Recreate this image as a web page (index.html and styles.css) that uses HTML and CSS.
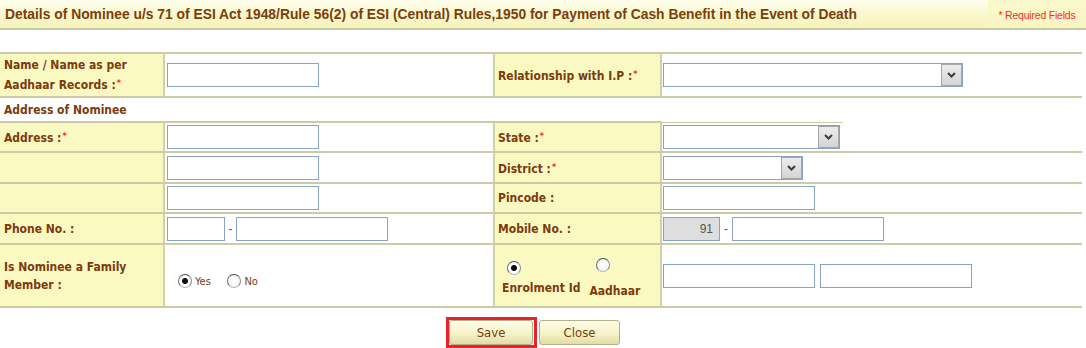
FILE: index.html
```html
<!DOCTYPE html>
<html lang="en">
<head>
<meta charset="utf-8">
<title>Details of Nominee</title>
<link rel="stylesheet" href="styles.css">
</head>
<body>
<div class="header">
  <div class="title">Details of Nominee u/s 71 of ESI Act 1948/Rule 56(2) of ESI (Central) Rules,1950 for Payment of Cash Benefit in the Event of Death</div>
  <div class="required">* Required Fields</div>
</div>

<table class="form">
  <colgroup>
    <col class="c1"><col class="c2"><col class="c3"><col class="c4">
  </colgroup>
  <tr class="r1">
    <td class="lbl first">Name / Name as per<br>Aadhaar Records :<span class="req">*</span></td>
    <td class="val v2"><input class="txt" type="text"></td>
    <td class="lbl mid">Relationship with I.P :<span class="req">*</span></td>
    <td class="val v4">
      <span class="sel w300"><select></select><span class="sel-btn"><svg width="9" height="6" viewBox="0 0 9 6"><polyline points="1,1 4.5,4.5 8,1" fill="none" stroke="#3c3c3c" stroke-width="2"/></svg></span></span>
    </td>
  </tr>
  <tr class="r2">
    <td class="section" colspan="4">Address of Nominee</td>
  </tr>
  <tr class="r3">
    <td class="lbl first">Address :<span class="req">*</span></td>
    <td class="val v2"><input class="txt" type="text"></td>
    <td class="lbl mid">State :<span class="req">*</span></td>
    <td class="val v4 partial">
      <span class="sel w177"><select></select><span class="sel-btn"><svg width="9" height="6" viewBox="0 0 9 6"><polyline points="1,1 4.5,4.5 8,1" fill="none" stroke="#3c3c3c" stroke-width="2"/></svg></span></span>
    </td>
  </tr>
  <tr class="r4">
    <td class="lbl first"></td>
    <td class="val v2"><input class="txt" type="text"></td>
    <td class="lbl mid">District :<span class="req">*</span></td>
    <td class="val v4">
      <span class="sel w140"><select></select><span class="sel-btn"><svg width="9" height="6" viewBox="0 0 9 6"><polyline points="1,1 4.5,4.5 8,1" fill="none" stroke="#3c3c3c" stroke-width="2"/></svg></span></span>
    </td>
  </tr>
  <tr class="r5">
    <td class="lbl first"></td>
    <td class="val v2"><input class="txt" type="text"></td>
    <td class="lbl mid">Pincode :</td>
    <td class="val v4"><input class="txt" type="text"></td>
  </tr>
  <tr class="r6">
    <td class="lbl first">Phone No. :</td>
    <td class="val v2">
      <div class="pair"><input class="txt short" type="text"><span class="dash">-</span><input class="txt" type="text"></div>
    </td>
    <td class="lbl mid">Mobile No. :</td>
    <td class="val v4">
      <div class="pair"><input class="txt code" type="text" value="91" readonly><span class="dash wide">-</span><input class="txt" type="text"></div>
    </td>
  </tr>
  <tr class="r7">
    <td class="lbl first">Is Nominee a Family<br>Member :</td>
    <td class="val v2 family">
      <label class="opt"><input class="radio" type="radio" name="fam" checked><span>Yes</span></label>
      <label class="opt"><input class="radio" type="radio" name="fam"><span>No</span></label>
    </td>
    <td class="lbl mid">
      <div class="idtype">
        <label class="grp g1"><input class="radio" type="radio" name="idt" checked><span>Enrolment Id</span></label>
        <label class="grp g2"><input class="radio" type="radio" name="idt"><span>Aadhaar</span></label>
      </div>
    </td>
    <td class="val v4">
      <div class="pair"><input class="txt" type="text"><input class="txt gapl" type="text"></div>
    </td>
  </tr>
</table>

<div class="actions">
  <span class="hl"><button class="btn save" type="button">Save</button></span>
  <button class="btn close" type="button">Close</button>
</div>
</body>
</html>
```

FILE: styles.css
```css
html, body {
  margin: 0;
  padding: 0;
  background: #ffffff;
}

body {
  width: 1086px;
  font-family: "DejaVu Sans Condensed", "DejaVu Sans", sans-serif;
  font-stretch: condensed;
}

/* Header band */
.header {
  display: flex;
  justify-content: space-between;
  height: 28px;
  border-bottom: 2px solid #cac8a4;
  background: linear-gradient(#fefeee, #faf8cf 45%, #f6f3bb);
}

.title {
  padding-left: 5px;
  line-height: 28px;
  font-family: "Liberation Sans", Arial, sans-serif;
  font-stretch: normal;
  font-weight: bold;
  font-size: 13.85px;
  color: #7b3e0f;
  white-space: nowrap;
}

.required {
  width: 98px;
  line-height: 30px;
  text-align: center;
  background: linear-gradient(#fbf9cd, #f8f5c0);
  font-family: "Liberation Sans Narrow", "Liberation Sans", Arial, sans-serif;
  font-stretch: condensed;
  font-size: 10.5px;
  color: #ff2a2a;
  letter-spacing: -0.2px;
}

/* Form table */
.form {
  border-collapse: collapse;
  table-layout: fixed;
  width: 1082px;
  margin-top: 22px;
}

.c1 { width: 164px; }
.c2 { width: 330px; }
.c3 { width: 167px; }
.c4 { width: 421px; }

.form td {
  padding: 0;
  border-top: 2px solid #cdcba6;
  border-bottom: 2px solid #cdcba6;
  vertical-align: middle;
}

.r1 { height: 44px; }
.r2 { height: 25px; }
.r3 { height: 30px; }
.r4 { height: 31px; }
.r5 { height: 30px; }
.r6 { height: 31px; }
.r7 { height: 63px; }

.form td.lbl {
  background: #fbf9c2;
  font-weight: bold;
  font-size: 12px;
  line-height: 18px;
  color: #7b3b0e;
}

.form td.first {
  padding-left: 4px;
  border-right: 2px solid #d3d1a8;
}

.form td.mid {
  padding-left: 3px;
  border-left: 2px solid #d3d1a8;
  border-right: 2px solid #d3d1a8;
}

.req {
  color: #ff2a2a;
  font-size: 9px;
  vertical-align: 3px;
  margin-left: 1px;
}

.form td.section {
  padding-left: 4px;
  font-weight: bold;
  font-size: 12px;
  color: #7b3b0e;
  border-bottom: none;
}

.form .r3 td.partial {
  border-top: none;
  background: linear-gradient(#cdcba6, #cdcba6) no-repeat 0 0 / 181px 1px;
}

.form td.v2 { padding-left: 2px; }
.form td.v4 { padding-left: 1px; }

/* Inputs */
.txt {
  box-sizing: border-box;
  width: 152px;
  height: 24px;
  margin: 0;
  padding: 0 3px;
  border: 1px solid #89a3c2;
  background: #ffffff;
  font-family: "Liberation Sans", Arial, sans-serif;
  font-size: 12px;
  vertical-align: middle;
  outline: none;
}

.txt.short { width: 58px; }

.txt.code {
  width: 57px;
  background: #dedede;
  color: #555555;
  text-align: right;
  padding-right: 6px;
}

.txt.gapl { margin-left: 5px; }

.pair {
  display: flex;
  align-items: center;
}

.dash {
  width: 11px;
  text-align: center;
  font-family: "Liberation Sans", Arial, sans-serif;
  font-size: 12px;
  color: #555555;
}

.dash.wide { width: 12px; }

/* Select widget */
.sel {
  box-sizing: border-box;
  display: inline-flex;
  height: 24px;
  border: 1px solid #89a3c2;
  background: #ffffff;
  vertical-align: middle;
}

.sel select {
  flex: 1;
  min-width: 0;
  margin: 0;
  border: none;
  background: transparent;
  appearance: none;
  -webkit-appearance: none;
  outline: none;
}

.sel-btn {
  box-sizing: border-box;
  width: 21px;
  height: 22px;
  display: flex;
  align-items: center;
  justify-content: center;
  border: 1px solid #a6a6a6;
  background: linear-gradient(#ececec, #d4d4d4);
}

.w300 { width: 300px; }
.w177 { width: 177px; }
.w140 { width: 140px; }

/* Radios */
.radio {
  appearance: none;
  -webkit-appearance: none;
  box-sizing: border-box;
  width: 14px;
  height: 14px;
  margin: 0;
  border: 1px solid;
  border-color: #4d4d4d #8a8a8a #b4b4b4 #6d6d6d;
  border-radius: 50%;
  background: radial-gradient(circle at 50% 50%, #ffffff, #f1f1f1);
  flex: none;
}

.radio:checked {
  background: radial-gradient(circle at 50% 50%, #111111 0, #111111 2.6px, #ffffff 3.4px);
}

.form td.family { padding-top: 14px; }

.opt {
  display: inline-flex;
  align-items: center;
  font-size: 11px;
  color: #7b3b0e;
  font-weight: normal;
}

.opt .radio { margin-right: 3px; }

.family .opt:first-child { margin-left: 11px; }
.family .opt + .opt { margin-left: 12px; }

.idtype {
  display: flex;
  align-items: center;
  padding: 6px 0 0 4px;
}

.grp {
  display: flex;
  flex-direction: column;
  align-items: flex-start;
  font-size: 12px;
  line-height: 15px;
}

.g1 .radio { margin: 0 0 6px 5px; }
.g2 { margin-left: 9px; }
.g2 .radio { margin: 0 0 12px 7px; }

/* Action buttons */
.actions {
  display: flex;
  justify-content: center;
  align-items: center;
  gap: 2px;
  padding-right: 20px;
  margin-top: 9px;
}

.hl {
  display: inline-flex;
  border: 3px solid #e8212b;
  padding-right: 1px;
}

.btn {
  box-sizing: border-box;
  height: 25px;
  margin: 0;
  padding: 0;
  border: 1px solid #b3b089;
  border-radius: 3px;
  background: linear-gradient(#fdfde8, #f6f3c6 55%, #e0dda6);
  font-family: "DejaVu Sans Condensed", "DejaVu Sans", sans-serif;
  font-stretch: condensed;
  font-size: 13px;
  color: #7b3b0e;
}

.btn.save { width: 84px; }
.btn.close { width: 81px; }
```
